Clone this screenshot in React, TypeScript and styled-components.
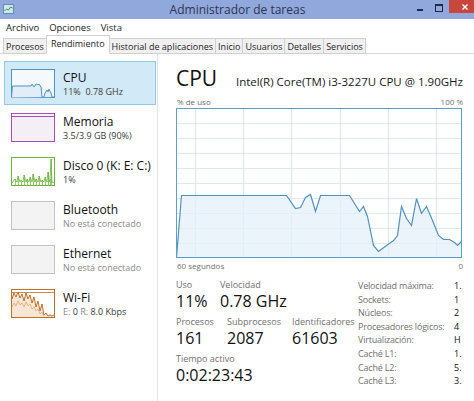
import React from "react";
import styled, { createGlobalStyle } from "styled-components";

const Global = createGlobalStyle`
  html, body { margin: 0; padding: 0; background: #fff; }
  body { font-family: "Open Sans", "Noto Sans", sans-serif; color: #1a1a1a; }
  * { box-sizing: border-box; }
`;

const Window = styled.div`
  width: 474px;
  height: 401px;
  display: flex;
  flex-direction: column;
  overflow: hidden;
  background: #fff;
`;

const TitleBar = styled.div`
  height: 19px;
  flex: none;
  background: #91a8dc;
  display: flex;
  align-items: flex-start;
`;

const AppIcon = styled.svg`
  margin: 4px 0 0 3px;
  flex: none;
`;

const Title = styled.div`
  flex: 1;
  text-align: center;
  font-size: 12px;
  line-height: 19px;
  color: #2d3550;
  padding-left: 50px;
  white-space: nowrap;
`;

const Controls = styled.div`
  display: flex;
  align-items: flex-start;
  flex: none;
`;

const CtrlBtn = styled.div<{ $w: number }>`
  width: ${(p) => p.$w}px;
  height: 19px;
  display: flex;
  align-items: center;
  justify-content: center;
`;

const CloseBtn = styled.div`
  width: 25px;
  height: 13px;
  background: #c9463d;
  display: flex;
  align-items: center;
  justify-content: center;
  padding-left: 6px;
`;

const MenuBar = styled.div`
  height: 17px;
  flex: none;
  display: flex;
  align-items: center;
  gap: 10px;
  padding-left: 6px;
  font-size: 9.5px;
  color: #1e1e1e;
`;

const TabBar = styled.div`
  height: 18px;
  flex: none;
  display: flex;
  align-items: flex-end;
  padding-left: 3px;
  border-bottom: 1px solid #d9d9d9;
`;

const Tab = styled.div<{ $active?: boolean }>`
  height: ${(p) => (p.$active ? 19 : 16)}px;
  margin-bottom: -1px;
  padding: ${(p) => (p.$active ? "0 4px 2px" : "0 2px")};
  font-size: 9px;
  display: flex;
  align-items: center;
  color: #1e1e1e;
  background: ${(p) => (p.$active ? "#fff" : "#f0f0f0")};
  border: 1px solid #d0d0d0;
  border-bottom-color: ${(p) => (p.$active ? "#fff" : "#d0d0d0")};
  margin-right: -1px;
  white-space: nowrap;
  position: relative;
  z-index: ${(p) => (p.$active ? 1 : 0)};
`;

const Main = styled.div`
  flex: 1;
  display: flex;
  min-height: 0;
`;

const Sidebar = styled.div`
  width: 158px;
  flex: none;
  border-right: 1px solid #e3e3e3;
  padding: 7px 1px 0 4px;
  display: flex;
  flex-direction: column;
`;

const Item = styled.div<{ $sel?: boolean }>`
  height: 44px;
  display: flex;
  align-items: flex-start;
  padding: 7px 0 0 6px;
  gap: 8px;
  background: ${(p) => (p.$sel ? "#d2e9f8" : "transparent")};
  border: 1px solid ${(p) => (p.$sel ? "#8fcaec" : "transparent")};
`;

const Thumb = styled.svg`
  flex: none;
  display: block;
`;

const ItemText = styled.div`
  display: flex;
  flex-direction: column;
  white-space: nowrap;
`;

const ItemTitle = styled.div`
  font-size: 12px;
  line-height: 17px;
  color: #111;
`;

const ItemSub = styled.div`
  font-size: 9px;
  line-height: 12px;
  color: #3c3c3c;
`;

const Dim = styled.span`
  color: #8a8a8a;
`;

const Detail = styled.div`
  flex: 1;
  padding: 9px 11px 0 18px;
  display: flex;
  flex-direction: column;
  min-width: 0;
`;

const Heading = styled.div`
  display: flex;
  align-items: baseline;
  justify-content: space-between;
  height: 34px;
`;

const BigTitle = styled.div`
  font-size: 21px;
  line-height: 30px;
  color: #111;
`;

const CpuName = styled.div`
  font-size: 11.5px;
  color: #1a1a1a;
  white-space: nowrap;
`;

const AxisRow = styled.div<{ $top?: number }>`
  display: flex;
  justify-content: space-between;
  font-size: 8px;
  line-height: 10px;
  color: #707070;
  padding: ${(p) => p.$top ?? 0}px 0 1px 1px;
`;

const Chart = styled.svg`
  display: block;
  flex: none;
`;

const Stats = styled.div`
  display: flex;
  padding-top: 6px;
`;

const LeftStats = styled.div`
  width: 182px;
  flex: none;
  display: flex;
  flex-direction: column;
  gap: 3px;
`;

const StatRow = styled.div`
  display: flex;
`;

const StatCol = styled.div<{ $w?: number }>`
  width: ${(p) => (p.$w ? `${p.$w}px` : "auto")};
  flex: none;
  display: flex;
  flex-direction: column;
  white-space: nowrap;
`;

const StatLabel = styled.div`
  font-size: 9px;
  line-height: 13px;
  color: #707070;
`;

const StatValue = styled.div`
  font-size: 16px;
  line-height: 21px;
  color: #111;
`;

const Table = styled.div`
  display: grid;
  grid-template-columns: 96px auto;
  font-size: 9px;
  line-height: 13.6px;
  white-space: nowrap;
  padding-top: 1px;
`;

const TLabel = styled.div`
  color: #707070;
  letter-spacing: -0.2px;
`;

const TValue = styled.div`
  color: #111;
`;

const chartW = 286;
const chartH = 150;
const linePts: [number, number][] = [
  [0, 149], [5, 87], [110, 87], [119, 100], [124, 99], [129, 89], [134, 86],
  [139, 103], [144, 87], [173, 87], [178, 95], [183, 103], [187, 98], [191, 108],
  [197, 137], [202, 143], [210, 137], [217, 132], [221, 127], [225, 98], [230, 110],
  [235, 117], [240, 90], [245, 105], [250, 98], [256, 112], [262, 127], [267, 131],
  [273, 131], [278, 134], [281, 137], [285, 133],
];

function CpuChart() {
  const pts = linePts.map(([x, y]) => `${x + 0.5},${y + 0.5}`).join(" ");
  const area = `0.5,${chartH} ${pts} ${chartW - 0.5},${chartH}`;
  const vx = [19, 67, 115, 164, 212, 260];
  const hy = [15, 30, 45, 60, 75, 90, 105, 120, 135];
  return (
    <Chart width={chartW} height={chartH} viewBox={`0 0 ${chartW} ${chartH}`}>
      <rect x="0" y="0" width={chartW} height={chartH} fill="#fff" />
      {vx.map((x) => (
        <line key={"v" + x} x1={x + 0.5} y1="0" x2={x + 0.5} y2={chartH} stroke="#dbe9f4" strokeWidth="1" />
      ))}
      {hy.map((y) => (
        <line key={"h" + y} x1="0" y1={y + 0.5} x2={chartW} y2={y + 0.5} stroke="#dbe9f4" strokeWidth="1" />
      ))}
      <polygon points={area} fill="#e6f0f9" fillOpacity="0.75" />
      <polyline points={pts} fill="none" stroke="#4f91c2" strokeWidth="1.2" />
      <rect x="0.5" y="0.5" width={chartW - 1} height={chartH - 1} fill="none" stroke="#5aa0cf" strokeWidth="1" />
    </Chart>
  );
}

function CpuThumb() {
  const p = "0.5,28 1.5,17 13,17 20,17 21,15 23,18 25,15 27,16 28,15 30,18 31,28 33,28 34,24 36,21 37,23 38,20 40,24 41,28 43.5,28";
  return (
    <Thumb width="44" height="29" viewBox="0 0 44 29">
      <rect x="0.5" y="0.5" width="43" height="28" fill="#f4f9fd" stroke="#4f94c5" />
      <polygon points={`0.5,28.5 ${p}`} fill="#e1eef8" />
      <polyline points={p} fill="none" stroke="#4f94c5" strokeWidth="1" />
    </Thumb>
  );
}

function MemThumb() {
  return (
    <Thumb width="44" height="29" viewBox="0 0 44 29">
      <rect x="0.5" y="0.5" width="43" height="28" fill="#f4f4f4" stroke="#a64ec0" />
      <rect x="1" y="3.5" width="42" height="24.5" fill="#f3eff5" />
      <line x1="0.5" y1="3.5" x2="43.5" y2="3.5" stroke="#a64ec0" strokeWidth="1" />
    </Thumb>
  );
}

function DiskThumb() {
  const spikes = [
    [4, 22], [7, 19], [10, 23], [13, 18], [16, 22], [19, 20], [22, 17], [25, 22], [28, 19],
    [31, 23], [34, 20], [37, 15], [39, 22], [40, 2],
  ];
  return (
    <Thumb width="44" height="29" viewBox="0 0 44 29">
      <rect x="0.5" y="0.5" width="43" height="28" fill="#fff" stroke="#6cb33f" />
      {spikes.map(([x, y]) => (
        <line key={x} x1={x + 0.5} y1="28" x2={x + 0.5} y2={y} stroke="#8fcb68" strokeWidth="1" />
      ))}
      <polyline
        points="1,26 4,22 6,25 7,19 9,25 10,23 12,25 13,18 15,25 16,22 18,25 19,20 21,25 22,17 24,25 25,22 27,25 28,19 30,25 31,23 33,25 34,20 36,25 37,15 38,25 39,22 40,2 41,25 43,26"
        fill="none"
        stroke="#6cb33f"
        strokeWidth="0.8"
      />
    </Thumb>
  );
}

function EmptyThumb() {
  return (
    <Thumb width="44" height="29" viewBox="0 0 44 29">
      <rect x="0.5" y="0.5" width="43" height="28" fill="#f3f3f3" stroke="#c3c3c3" />
    </Thumb>
  );
}

function WifiThumb() {
  const p1 = "1,10 3,4 5,8 7,3 9,9 11,5 13,12 15,4 17,10 19,6 21,14 23,8 25,18 27,12 29,22 31,15 33,26 35,24 37,27 39,26 41,27 43,26";
  const p2 = "1,18 3,14 5,17 7,12 9,16 11,14 13,18 15,13 17,17 19,15 21,20 23,18 25,22 27,20 29,25 31,23 33,27";
  return (
    <Thumb width="44" height="29" viewBox="0 0 44 29">
      <rect x="0.5" y="0.5" width="43" height="28" fill="#fff" stroke="#c1702b" />
      <line x1="0.5" y1="3.5" x2="43.5" y2="3.5" stroke="#c1702b" strokeWidth="0.8" />
      <polygon points={`1,28 ${p1} 43,28`} fill="#f7e6d6" />
      <polyline points={p2} fill="none" stroke="#e0a66f" strokeWidth="0.8" />
      <polyline points={p1} fill="none" stroke="#c1702b" strokeWidth="1" />
    </Thumb>
  );
}

export default function App() {
  return (
    <Window>
      <Global />
      <TitleBar>
        <AppIcon width="11" height="10" viewBox="0 0 11 10">
          <rect x="0.5" y="0.5" width="10" height="9" fill="#cfe6f2" stroke="#5c8fb0" />
          <polyline points="1.5,7 3.5,5 5.5,6 7.5,3 9.5,4" fill="none" stroke="#3c9a3c" strokeWidth="1" />
        </AppIcon>
        <Title>Administrador de tareas</Title>
        <Controls>
          <CtrlBtn $w={18}>
            <svg width="6" height="3" viewBox="0 0 6 3">
              <rect x="0" y="1" width="6" height="2" fill="#1c2a4a" />
            </svg>
          </CtrlBtn>
          <CtrlBtn $w={20}>
            <svg width="8" height="8" viewBox="0 0 8 8" style={{ marginTop: -4 }}>
              <rect x="0.5" y="0.5" width="7" height="7" fill="none" stroke="#1c2a4a" />
              <rect x="0.5" y="0.5" width="7" height="1.5" fill="#1c2a4a" />
            </svg>
          </CtrlBtn>
          <CloseBtn>
            <svg width="6" height="6" viewBox="0 0 6 6">
              <path d="M0.5 0.5 L5.5 5.5 M5.5 0.5 L0.5 5.5" stroke="#fff" strokeWidth="1.4" />
            </svg>
          </CloseBtn>
        </Controls>
      </TitleBar>
      <MenuBar>
        <span>Archivo</span>
        <span>Opciones</span>
        <span>Vista</span>
      </MenuBar>
      <TabBar>
        <Tab>Procesos</Tab>
        <Tab $active>Rendimiento</Tab>
        <Tab>Historial de aplicaciones</Tab>
        <Tab>Inicio</Tab>
        <Tab>Usuarios</Tab>
        <Tab>Detalles</Tab>
        <Tab>Servicios</Tab>
      </TabBar>
      <Main>
        <Sidebar>
          <Item $sel>
            <CpuThumb />
            <ItemText>
              <ItemTitle>CPU</ItemTitle>
              <ItemSub>11%&nbsp; 0.78 GHz</ItemSub>
            </ItemText>
          </Item>
          <Item>
            <MemThumb />
            <ItemText>
              <ItemTitle>Memoria</ItemTitle>
              <ItemSub>3.5/3.9 GB (90%)</ItemSub>
            </ItemText>
          </Item>
          <Item>
            <DiskThumb />
            <ItemText>
              <ItemTitle>Disco 0 (K: E: C:)</ItemTitle>
              <ItemSub>1%</ItemSub>
            </ItemText>
          </Item>
          <Item>
            <EmptyThumb />
            <ItemText>
              <ItemTitle>Bluetooth</ItemTitle>
              <ItemSub>
                <Dim>No está conectado</Dim>
              </ItemSub>
            </ItemText>
          </Item>
          <Item>
            <EmptyThumb />
            <ItemText>
              <ItemTitle>Ethernet</ItemTitle>
              <ItemSub>
                <Dim>No está conectado</Dim>
              </ItemSub>
            </ItemText>
          </Item>
          <Item>
            <WifiThumb />
            <ItemText>
              <ItemTitle>Wi-Fi</ItemTitle>
              <ItemSub>
                <Dim>E:</Dim> 0 <Dim>R:</Dim> 8.0 Kbps
              </ItemSub>
            </ItemText>
          </Item>
        </Sidebar>
        <Detail>
          <Heading>
            <BigTitle>CPU</BigTitle>
            <CpuName>Intel(R) Core(TM) i3-3227U CPU @ 1.90GHz</CpuName>
          </Heading>
          <AxisRow>
            <span>% de uso</span>
            <span>100 %</span>
          </AxisRow>
          <CpuChart />
          <AxisRow $top={3}>
            <span>60 segundos</span>
            <span>0</span>
          </AxisRow>
          <Stats>
            <LeftStats>
              <StatRow>
                <StatCol $w={44}>
                  <StatLabel>Uso</StatLabel>
                  <StatValue>11%</StatValue>
                </StatCol>
                <StatCol>
                  <StatLabel>Velocidad</StatLabel>
                  <StatValue>0.78 GHz</StatValue>
                </StatCol>
              </StatRow>
              <StatRow>
                <StatCol $w={51}>
                  <StatLabel>Procesos</StatLabel>
                  <StatValue>161</StatValue>
                </StatCol>
                <StatCol $w={65}>
                  <StatLabel>Subprocesos</StatLabel>
                  <StatValue>2087</StatValue>
                </StatCol>
                <StatCol>
                  <StatLabel>Identificadores</StatLabel>
                  <StatValue>61603</StatValue>
                </StatCol>
              </StatRow>
              <StatRow>
                <StatCol>
                  <StatLabel>Tiempo activo</StatLabel>
                  <StatValue>0:02:23:43</StatValue>
                </StatCol>
              </StatRow>
            </LeftStats>
            <Table>
              <TLabel>Velocidad máxima:</TLabel>
              <TValue>1.</TValue>
              <TLabel>Sockets:</TLabel>
              <TValue>1</TValue>
              <TLabel>Núcleos:</TLabel>
              <TValue>2</TValue>
              <TLabel>Procesadores lógicos:</TLabel>
              <TValue>4</TValue>
              <TLabel>Virtualización:</TLabel>
              <TValue>H</TValue>
              <TLabel>Caché L1:</TLabel>
              <TValue>1.</TValue>
              <TLabel>Caché L2:</TLabel>
              <TValue>5.</TValue>
              <TLabel>Caché L3:</TLabel>
              <TValue>3.</TValue>
            </Table>
          </Stats>
        </Detail>
      </Main>
    </Window>
  );
}
